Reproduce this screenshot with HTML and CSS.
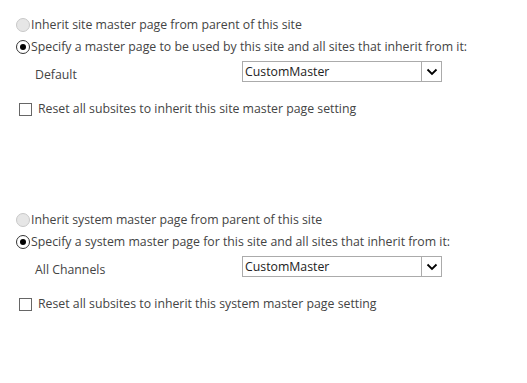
FILE: index.html
```html
<!DOCTYPE html>
<html>
<head>
<meta charset="utf-8">
<link rel="stylesheet" href="styles.css">
</head>
<body>
<div class="page">
  <section class="group">
    <div class="opt">
      <span class="radio disabled"></span>
      <span class="lbl">Inherit site master page from parent of this site</span>
    </div>
    <div class="opt">
      <span class="radio checked"></span>
      <span class="lbl">Specify a master page to be used by this site and all sites that inherit from it:</span>
    </div>
    <div class="pick">
      <span class="pick-name">Default</span>
      <div class="select">
        <span class="select-val">CustomMaster</span>
        <span class="select-btn"><svg width="12" height="8" viewBox="0 0 12 8"><path d="M1.5 1.5 L6 6 L10.5 1.5" fill="none" stroke="#000" stroke-width="1.8"/></svg></span>
      </div>
    </div>
    <div class="reset">
      <span class="check"></span>
      <span class="lbl">Reset all subsites to inherit this site master page setting</span>
    </div>
  </section>
  <section class="group">
    <div class="opt">
      <span class="radio disabled"></span>
      <span class="lbl">Inherit system master page from parent of this site</span>
    </div>
    <div class="opt">
      <span class="radio checked"></span>
      <span class="lbl">Specify a system master page for this site and all sites that inherit from it:</span>
    </div>
    <div class="pick">
      <span class="pick-name">All Channels</span>
      <div class="select">
        <span class="select-val">CustomMaster</span>
        <span class="select-btn"><svg width="12" height="8" viewBox="0 0 12 8"><path d="M1.5 1.5 L6 6 L10.5 1.5" fill="none" stroke="#000" stroke-width="1.8"/></svg></span>
      </div>
    </div>
    <div class="reset">
      <span class="check"></span>
      <span class="lbl">Reset all subsites to inherit this system master page setting</span>
    </div>
  </section>
</div>
</body>
</html>
```

FILE: styles.css
```css
html, body {
  margin: 0;
  padding: 0;
  background: #fff;
}
body {
  font-family: "Open Sans", "Liberation Sans", sans-serif;
  font-size: 12.3px;
  line-height: 18px;
  color: #444;
}
.page {
  padding: 14px 0 0 16px;
}
.group + .group {
  margin-top: 91px;
}
.opt {
  display: flex;
  align-items: center;
  height: 22px;
}
.radio {
  box-sizing: border-box;
  width: 14px;
  height: 14px;
  border-radius: 50%;
  border: 1px solid #999;
  background: #fff;
  margin-right: 1px;
  position: relative;
}
.radio.disabled {
  border-color: #c8c8c8;
  background: #e6e6e6;
}
.radio.checked {
  border-color: #333;
}
.radio.checked::after {
  content: "";
  position: absolute;
  left: 3px;
  top: 3px;
  width: 6px;
  height: 6px;
  border-radius: 50%;
  background: #000;
}
.lbl {
  white-space: nowrap;
}
.pick {
  display: flex;
  align-items: flex-start;
  height: 21px;
  margin-top: 3px;
  padding-left: 19px;
}
.pick-name {
  width: 207px;
  padding-top: 5px;
}
.select {
  box-sizing: border-box;
  width: 200px;
  height: 21px;
  border: 1px solid #ababab;
  display: flex;
  align-items: center;
  justify-content: space-between;
  background: #fff;
}
.select-val {
  padding-left: 2px;
  color: #222;
}
.select-btn {
  box-sizing: border-box;
  width: 20px;
  height: 19px;
  border-left: 1px solid #ababab;
  display: flex;
  align-items: center;
  justify-content: center;
  background: #fff;
}
.reset {
  display: flex;
  align-items: center;
  height: 18px;
  margin-top: 18px;
  padding-left: 3px;
}
.check {
  box-sizing: border-box;
  width: 13px;
  height: 13px;
  border: 1px solid #666;
  background: #fff;
  margin-right: 6px;
}
```
